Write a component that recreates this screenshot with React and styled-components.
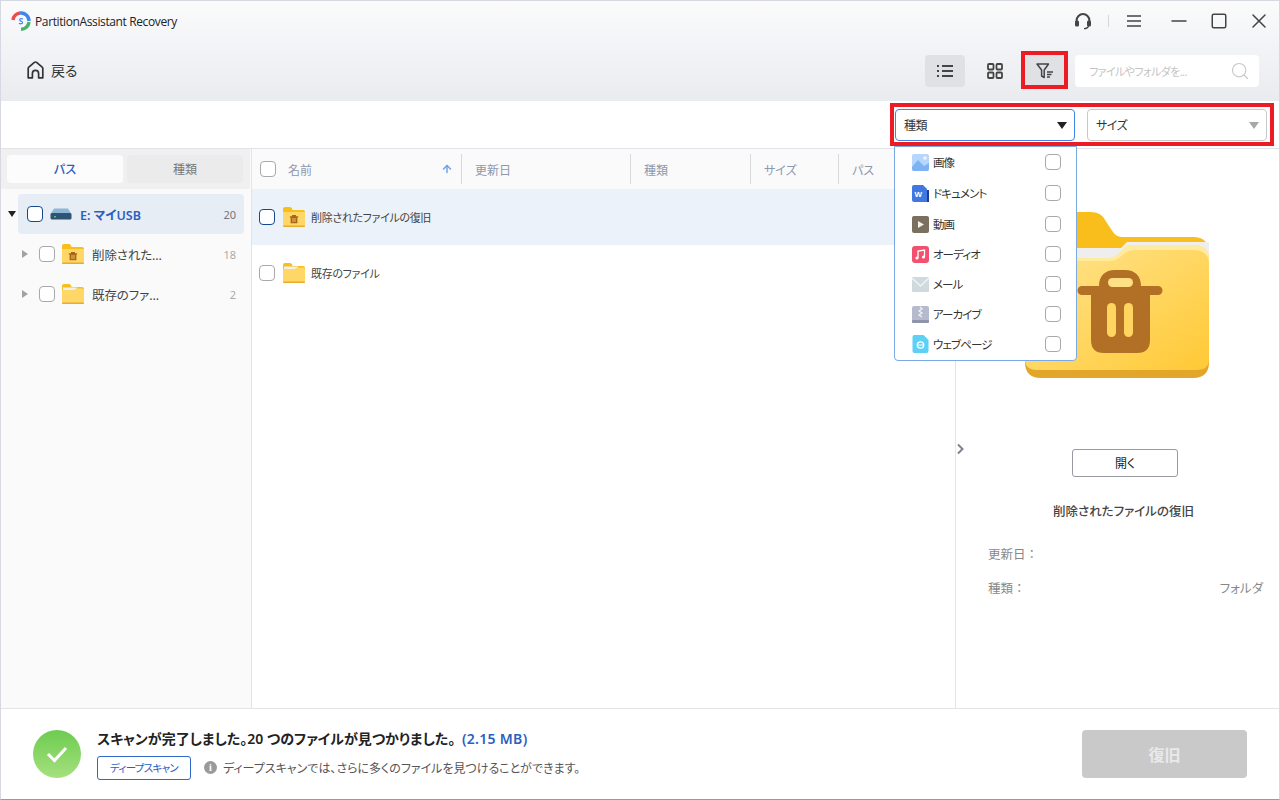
import React from "react";
import styled, { createGlobalStyle } from "styled-components";
import { LuSearch, LuX, LuMinus, LuSquare, LuArrowUp } from "react-icons/lu";

const GlobalStyle = createGlobalStyle`
  html, body { margin: 0; padding: 0; background: #fff; }
  body {
    font-family: "Noto Sans", "Noto Sans CJK JP", sans-serif;
    font-feature-settings: "palt";
    color: #333;
  }
  * { box-sizing: border-box; }
`;

const Window = styled.div`
  position: relative;
  display: flex;
  flex-direction: column;
  width: 1280px;
  height: 800px;
  overflow: hidden;
  border: 1px solid #d6d9e2;
  border-bottom-color: #9a9a9a;
  background: #fff;
`;

// header
const Header = styled.header`
  flex: none;
  height: 100px;
  background: linear-gradient(180deg, #fbfbfc 0%, #e9ebef 100%);
`;
const TitleRow = styled.div`
  display: flex;
  align-items: center;
  height: 40px;
  padding-left: 10px;
`;
const AppName = styled.div`
  margin-left: 4px;
  font-family: "Open Sans", sans-serif;
  font-size: 12px;
  letter-spacing: -0.38px;
  color: #222;
`;
const WinControls = styled.div`
  display: flex;
  align-items: center;
  margin-left: auto;
  color: #444;
`;
const WinIcon = styled.div`
  display: flex;
  align-items: center;
  justify-content: center;
  width: ${(p) => p.$w || 40}px;
`;
const WinDivider = styled.div`
  width: 1px;
  height: 12px;
  margin-left: 16px;
  background: #d5d6da;
`;
const ToolRow = styled.div`
  display: flex;
  align-items: flex-start;
  height: 60px;
  padding: 14px 20px 0 26px;
`;
const BackLink = styled.div`
  display: flex;
  align-items: center;
  gap: 7px;
  height: 32px;
  margin-top: -1px;
  font-size: 14px;
  color: #333;
`;
const ToolGroup = styled.div`
  display: flex;
  align-items: flex-start;
  gap: 10px;
  margin-left: auto;
`;
const ToolBtn = styled.div`
  position: relative;
  display: flex;
  align-items: center;
  justify-content: center;
  width: 40px;
  height: 32px;
  border-radius: 4px;
  background: ${(p) => (p.$on ? "#dfe1e5" : "transparent")};
  color: #444;
`;
const RedMark = styled.div`
  position: absolute;
  left: -4px;
  right: -3px;
  top: -4px;
  bottom: -2px;
  border: 4px solid #ed1c24;
`;
const SearchBox = styled.div`
  display: flex;
  align-items: center;
  justify-content: space-between;
  width: 184px;
  height: 32px;
  padding: 0 9px 0 14px;
  border-radius: 4px;
  background: #fff;
  font-size: 11px;
  letter-spacing: -0.6px;
  color: #c4c4c4;
`;

// filter bar
const FilterBar = styled.div`
  position: relative;
  z-index: 3;
  flex: none;
  display: flex;
  justify-content: flex-end;
  height: 48px;
  padding: 2px 5px 0 0;
  border-bottom: 1px solid #e2e3e8;
  background: #fff;
`;
const FilterFrame = styled.div`
  display: flex;
  gap: 12px;
  width: 384px;
  height: 43px;
  padding: 2px 3px 0 1px;
  border: 4px solid #ed1c24;
`;
const Select = styled.div`
  display: flex;
  flex: none;
  align-items: center;
  justify-content: space-between;
  width: 180px;
  height: 32px;
  padding: 0 7px 0 8px;
  border: 1px solid ${(p) => (p.$active ? "#3d86e6" : "#c9c9c9")};
  border-radius: 4px;
  font-size: 12px;
  letter-spacing: -0.5px;
  color: #333;
`;
const Caret = styled.span`
  width: 0;
  height: 0;
  border-left: 5px solid transparent;
  border-right: 5px solid transparent;
  border-top: 7px solid ${(p) => (p.$muted ? "#a8a8a8" : "#222")};
`;
const Dropdown = styled.div`
  position: absolute;
  z-index: -1;
  top: 45px;
  right: 202px;
  width: 183px;
  height: 215px;
  border: 1px solid #7aa9e4;
  border-radius: 0 0 4px 4px;
  background: #fff;
`;
const DropItem = styled.div`
  display: flex;
  align-items: center;
  height: 30px;
  padding: 0 15px 0 17px;
  font-size: 11.5px;
  color: #333;

  &:nth-child(2) {
    height: 32px;
  }
`;
const DropLabel = styled.span`
  flex: 1;
  margin-left: 4px;
  letter-spacing: -0.9px;
`;

// body
const Body = styled.div`
  flex: 1;
  display: flex;
  min-height: 0;
`;
const Sidebar = styled.aside`
  flex: none;
  width: 251px;
  border-right: 1px solid #e4e4e6;
  background: #fafafa;
`;
const TabStrip = styled.div`
  display: flex;
  gap: 4px;
  width: 249px;
  height: 40px;
  padding: 6px;
  background: #f0f0f0;
`;
const Tab = styled.div`
  display: flex;
  align-items: center;
  justify-content: center;
  width: 116px;
  border-radius: 4px;
  font-size: 12px;
  font-weight: ${(p) => (p.$on ? 500 : 400)};
  color: ${(p) => (p.$on ? "#2c5fc0" : "#777")};
  background: ${(p) => (p.$on ? "#fcfcfc" : "#ebebeb")};
`;
const Tree = styled.div`
  padding: 5px 6px 0 5px;
`;
const TreeRow = styled.div`
  display: flex;
  align-items: center;
  height: 40px;
  padding-right: ${(p) => (p.$root ? 1 : 9)}px;
  padding-left: ${(p) => (p.$root ? 2 : 16)}px;
`;
const RootHighlight = styled.div`
  display: flex;
  align-items: center;
  flex: 1;
  height: 40px;
  margin-left: 2px;
  padding: 0 8px 0 9px;
  border-radius: 4px;
  background: #e6edf5;
`;
const Expander = styled.span`
  flex: none;
  width: 0;
  height: 0;
  ${(p) =>
    p.$open
      ? "border-left: 4px solid transparent; border-right: 4px solid transparent; border-top: 6px solid #222;"
      : "border-top: 4px solid transparent; border-bottom: 4px solid transparent; border-left: 6px solid #a2a2a2;"}
`;
const Check = styled.span`
  flex: none;
  display: block;
  width: 16px;
  height: 16px;
  margin: ${(p) => p.$m || 0};
  border: 1px solid ${(p) => (p.$blue ? "#17478f" : "#a9a9a9")};
  border-radius: 4px;
  background: #fff;
`;
const DriveSlot = styled.span`
  display: flex;
  margin-left: 7px;
`;
const TreeName = styled.span`
  flex: 1;
  margin-left: 8px;
  font-size: ${(p) => (p.$root ? 12.5 : 12.5)}px;
  font-weight: ${(p) => (p.$root ? 600 : 400)};
  letter-spacing: ${(p) => (p.$root ? 0 : -0.1)}px;
  color: ${(p) => (p.$root ? "#2c5fc0" : "#444")};
`;
const TreeCount = styled.span`
  font-size: 11px;
  color: ${(p) => (p.$dark ? "#777" : "#aaa")};
`;

const Main = styled.main`
  flex: none;
  width: 704px;
  border-right: 1px solid #e4e4e6;
`;
const TableHead = styled.div`
  display: grid;
  grid-template-columns: 209px 169px 120px 88px 1fr;
  height: 40px;
  background: #fafafa;
`;
const HeadCell = styled.div`
  display: flex;
  align-items: center;
  margin: 5px 0;
  padding: 2px 0 0 13px;
  border-left: 1px solid #d9d9d9;
  font-size: 12px;
  color: #8d98ad;
`;
const NameCell = styled.div`
  display: flex;
  align-items: center;
  margin: 5px 0;
  padding: 0 8px;
  font-size: 12px;
  color: #8d98ad;
`;
const HeadName = styled.span`
  flex: 1;
  margin-left: 12px;
  padding-top: 2px;
`;
const SortArrow = styled(LuArrowUp)`
  color: #6fa3e8;
`;
const FileRow = styled.div`
  display: flex;
  align-items: center;
  height: 56px;
  padding-left: 7px;
  background: ${(p) => (p.$on ? "#ebf2fa" : "#fff")};
  font-size: 11px;
  letter-spacing: -0.33px;
  color: #444;
`;
const FileName = styled.span`
  margin-left: 6px;
`;

const Preview = styled.aside`
  position: relative;
  flex: 1;
  display: flex;
  flex-direction: column;
  padding-top: 63px;
  font-size: 12.5px;
`;
const ExpandChevron = styled.div`
  position: absolute;
  top: 293px;
  left: 0;
  color: #7d8391;
`;
const BigFolder = styled.svg`
  display: block;
  flex: none;
  margin-left: 69px;
`;
const OpenBtn = styled.div`
  display: flex;
  align-items: center;
  justify-content: center;
  width: 106px;
  height: 28px;
  margin: 71px 0 0 116px;
  border: 1px solid #9a9aa2;
  border-radius: 3px;
  font-size: 12px;
  color: #222;
`;
const PreviewName = styled.div`
  margin: 24px 0 0 97px;
  font-weight: 500;
  color: #444;
`;
const Meta = styled.div`
  display: flex;
  justify-content: space-between;
  margin: ${(p) => p.$mt}px 16px 0 32px;
  font-size: 12.5px;
  color: #888;
`;
const MetaLabel = styled.span`
  font-feature-settings: normal;
`;

// footer
const Footer = styled.footer`
  flex: none;
  display: flex;
  align-items: center;
  height: 91px;
  padding: 0 32px;
  border-top: 1px solid #e4e4e6;
`;
const DoneBadge = styled.div`
  flex: none;
  display: flex;
  align-items: center;
  justify-content: center;
  width: 48px;
  height: 48px;
  border-radius: 50%;
  background: linear-gradient(180deg, #6dcc50 0%, #a6e07e 100%);
`;
const Status = styled.div`
  margin-left: 16px;
`;
const StatusLine = styled.div`
  font-size: 14px;
  font-weight: 600;
  line-height: 20px;
  color: #222;
`;
const Size = styled.span`
  margin-left: 3px;
  letter-spacing: 0.3px;
  color: #2c5fc0;
`;
const HintRow = styled.div`
  display: flex;
  align-items: center;
  margin-top: 7px;
  font-size: 12px;
  color: #555;
`;
const DeepBtn = styled.div`
  display: flex;
  align-items: center;
  justify-content: center;
  width: 94px;
  height: 24px;
  margin-right: 13px;
  border: 1px solid #2f68c8;
  border-radius: 3px;
  font-size: 10.5px;
  letter-spacing: -0.7px;
  color: #2c5fc0;
`;
const InfoDot = styled.span`
  display: flex;
  align-items: center;
  justify-content: center;
  width: 13px;
  height: 13px;
  margin-right: 6px;
  border-radius: 50%;
  background: #9a9a9a;
  font-family: "Liberation Serif", serif;
  font-size: 10px;
  font-weight: 700;
  color: #fff;
`;
const RecoverBtn = styled.div`
  display: flex;
  align-items: center;
  justify-content: center;
  width: 165px;
  height: 48px;
  margin-left: auto;
  border-radius: 4px;
  background: #c9c9c9;
  font-size: 16px;
  font-weight: 700;
  color: #e9e9e9;
`;

const Logo = () => (
  <svg width="20" height="20" viewBox="0 0 20 20" fill="none">
    <path d="M2 9 A8 8 0 0 1 9 2" stroke="#ee4b4b" strokeWidth="3.4" />
    <path d="M9 2 A8 8 0 0 1 18 10" stroke="#3f86ee" strokeWidth="3.4" />
    <path d="M18 11 A8 8 0 0 1 10 18.2" stroke="#44b565" strokeWidth="3.4" />
    <path d="M12 8 C10 7 8 8 9 9.5 C10 10.5 12 10.5 11.5 12 C11 13 9 13 8 12.2" stroke="#3f86ee" strokeWidth="1.2" />
  </svg>
);

const Headset = () => (
  <svg width="18" height="18" viewBox="0 0 18 18" fill="none">
    <path d="M2.6 10 V8.5 A6.4 6.4 0 0 1 15.4 8.5 V10" stroke="#444" strokeWidth="2" />
    <rect x="1" y="8.5" width="4" height="6" rx="1.5" fill="#444" />
    <rect x="13" y="8.5" width="4" height="6" rx="1.5" fill="#444" />
    <path d="M14.5 14 C14 16 12 16.6 10 16.6" stroke="#444" strokeWidth="1.3" />
  </svg>
);

const Hamburger = () => (
  <svg width="16" height="14" viewBox="0 0 16 14" stroke="#444" strokeWidth="1.5">
    <path d="M1 2 H15 M1 7 H15 M1 12 H15" />
  </svg>
);

const HomeIcon = () => (
  <svg width="17" height="18" viewBox="0 0 17 18" fill="none" stroke="#333" strokeWidth="1.7" strokeLinejoin="round">
    <path d="M1.2 16.8 V7.6 Q1.2 6.8 1.8 6.2 L7.4 1.4 Q8.5 0.6 9.6 1.4 L15.2 6.2 Q15.8 6.8 15.8 7.6 V16.8 H11.6 V12.4 A3.1 3.1 0 0 0 5.4 12.4 V16.8 Z" />
  </svg>
);

const ListIcon = () => (
  <svg width="18" height="14" viewBox="0 0 18 14" stroke="#444" strokeWidth="1.9">
    <path d="M1 2 H3 M6 2 H17 M1 7 H3 M6 7 H17 M1 12 H3 M6 12 H17" />
  </svg>
);

const GridIcon = () => (
  <svg width="16" height="16" viewBox="0 0 16 16" fill="none" stroke="#444" strokeWidth="1.8">
    <rect x="1" y="1" width="5.5" height="5.5" rx="1" />
    <rect x="9.5" y="1" width="5.5" height="5.5" rx="1" />
    <rect x="1" y="9.5" width="5.5" height="5.5" rx="1" />
    <rect x="9.5" y="9.5" width="5.5" height="5.5" rx="1" />
  </svg>
);

const FilterIcon = () => (
  <svg width="18" height="16" viewBox="0 0 18 16" fill="none" stroke="#444" strokeWidth="1.5">
    <path d="M1 1 H12.5 L8.2 7 V14.5 L5.6 13 V7 Z" strokeLinejoin="round" />
    <path d="M11 9 H17 M11 11.5 H15.5 M11 14 H14" />
  </svg>
);

const DriveIcon = () => (
  <svg width="22" height="12" viewBox="0 0 22 12">
    <path d="M4 0.5 H18 L21.5 6 H0.5 Z" fill="#8eb6d6" />
    <rect x="0.5" y="5" width="21" height="6.5" rx="1.5" fill="#2f5376" />
    <rect x="4" y="8" width="2" height="1.4" fill="#46d06a" />
  </svg>
);

const FolderIcon = ({ trash }) => (
  <svg width="22" height="20" viewBox="0 0 22 20">
    <path d="M0 2 Q0 0 2 0 H7 Q8.5 0 9 1.5 L9.6 3 H20 Q22 3 22 5 V12 H0 Z" fill="#f9bd1c" />
    {!trash && <rect x="1" y="3.5" width="14" height="3" fill="#f0f0ea" />}
    <path
      d={trash ? "M0 5 H22 V18 Q22 20 20 20 H2 Q0 20 0 18 Z" : "M0 6 H12 L14 4.5 H20 Q22 4.5 22 6.5 V18 Q22 20 20 20 H2 Q0 20 0 18 Z"}
      fill="#ffd767"
    />
    <rect x="0" y="18.6" width="22" height="1.4" rx="0.7" fill="#e8ac2c" />
    {trash && (
      <path
        d="M6.8 9.2 H9 V8 H13 V9.2 H15.2 V10.4 H14.4 V16.2 H7.6 V10.4 H6.8 Z M9.6 11 V15 H10.4 V11 Z M11.6 11 V15 H12.4 V11 Z"
        fill="#a9651c"
        fillRule="evenodd"
      />
    )}
  </svg>
);

const LargeFolder = () => (
  <BigFolder width="184" height="166" viewBox="0 0 184 166">
    <defs>
      <linearGradient id="front" x1="0" y1="0" x2="1" y2="1">
        <stop offset="0" stopColor="#ffe592" />
        <stop offset="1" stopColor="#ffc935" />
      </linearGradient>
    </defs>
    <path d="M0 14 Q0 0 14 0 H66 Q76 0 80 8 L88 20 Q91 25 98 25 H168 Q184 25 184 41 V100 H0 Z" fill="#fabe1c" />
    <path d="M0 36 H96 L102 30 H184 V60 H0 Z" fill="#eeeeee" />
    <path d="M0 100 H184 V150 Q184 166 168 166 H16 Q0 166 0 150 Z" fill="#e2a62a" />
    <path d="M0 46 H84 Q88 46 92 43 L100 36 Q102 33 107 33 H168 Q184 33 184 48 V147 Q184 158 172 158 H12 Q0 158 0 147 Z" fill="url(#front)" />
    <path d="M0 46 H84 Q88 46 92 43 L100 36 Q102 33 107 33 H168 Q184 33 184 48 V52 Q184 38 168 38 H108 Q104 38 100 41 L94 46 Q90 49 84 49 H0 Z" fill="#ffeb9f" />
    <path
      d="M74 74 C74 64 80 58 90 58 H100 C110 58 116 64 116 74 H133 A4.5 4.5 0 0 1 133 83 H125 V128 Q125 141 112 141 H79 Q66 141 66 128 V83 H57 A4.5 4.5 0 0 1 57 74 Z"
      fill="#b26f26"
    />
    <rect x="83" y="66" width="25" height="9" rx="4.5" fill="#ffdf85" />
    <rect x="82" y="91" width="9" height="34" rx="4.5" fill="#ffd560" />
    <rect x="99" y="91" width="9" height="34" rx="4.5" fill="#ffd560" />
  </BigFolder>
);

const ImageType = () => (
  <svg width="17" height="17" viewBox="0 0 17 17">
    <rect width="17" height="17" rx="2" fill="#b6d6fb" />
    <path d="M0 13 L6 6 L12 12 L17 9 V15 Q17 17 15 17 H2 Q0 17 0 15 Z" fill="#7db3f5" />
    <circle cx="13" cy="4" r="1.8" fill="#eef6ff" />
  </svg>
);
const WordType = () => (
  <svg width="17" height="17" viewBox="0 0 17 17">
    <rect x="12" y="5" width="5" height="12" fill="#1c3f94" />
    <path d="M2 0 H11 L15 4 V17 H2 Q0 17 0 15 V2 Q0 0 2 0 Z" fill="#3f78e0" />
    <text x="2.5" y="12" fontSize="8" fontWeight="700" fill="#fff" fontFamily="Liberation Sans">W</text>
  </svg>
);
const VideoType = () => (
  <svg width="17" height="17" viewBox="0 0 17 17">
    <rect width="17" height="17" rx="2" fill="#7b705f" />
    <path d="M6 5 L12 8.5 L6 12 Z" fill="#f4f1ea" />
  </svg>
);
const AudioType = () => (
  <svg width="17" height="17" viewBox="0 0 17 17">
    <rect width="17" height="17" rx="3" fill="#f2506f" />
    <path d="M6 12 V5 L12.5 4 V11" fill="none" stroke="#fff" strokeWidth="1.3" />
    <circle cx="5" cy="12" r="1.6" fill="#fff" />
    <circle cx="11.5" cy="11" r="1.6" fill="#fff" />
  </svg>
);
const MailType = () => (
  <svg width="17" height="17" viewBox="0 0 17 17">
    <rect y="1" width="17" height="15" rx="1" fill="#d0dade" />
    <path d="M0 2 L8.5 10 L17 2" fill="none" stroke="#eef3f5" strokeWidth="1.6" />
  </svg>
);
const ArchiveType = () => (
  <svg width="17" height="17" viewBox="0 0 17 17">
    <rect width="17" height="17" rx="2" fill="#b5bbcd" />
    <rect y="14" width="17" height="3" rx="1" fill="#8f95a8" />
    <path d="M8 1 L10 3 L7 5 L10 7 L7 9 L10 11" fill="none" stroke="#f1f2f6" strokeWidth="1.3" />
  </svg>
);
const WebType = () => (
  <svg width="17" height="18" viewBox="0 0 16 18">
    <path d="M2 0 H11 L16 5 V16 Q16 18 14 18 H2 Q0 18 0 16 V2 Q0 0 2 0 Z" fill="#5dd0f5" />
    <circle cx="8" cy="10" r="3.2" fill="none" stroke="#fff" strokeWidth="1.3" />
    <path d="M5 10 H11" stroke="#fff" strokeWidth="1" />
  </svg>
);

const fileTypes = [
  ["画像", ImageType],
  ["ドキュメント", WordType],
  ["動画", VideoType],
  ["オーディオ", AudioType],
  ["メール", MailType],
  ["アーカイブ", ArchiveType],
  ["ウェブページ", WebType],
];

const App = () => {
  return (
    <Window>
      <GlobalStyle />
      <Header>
        <TitleRow>
          <Logo />
          <AppName>PartitionAssistant Recovery</AppName>
          <WinControls>
            <WinIcon $w={18}><Headset /></WinIcon>
            <WinDivider />
            <WinIcon $w={50}><Hamburger /></WinIcon>
            <WinIcon><LuMinus size={24} strokeWidth={1.5} /></WinIcon>
            <WinIcon><LuSquare size={18} strokeWidth={2} /></WinIcon>
            <WinIcon><LuX size={24} strokeWidth={1.5} /></WinIcon>
          </WinControls>
        </TitleRow>
        <ToolRow>
          <BackLink>
            <HomeIcon />
            戻る
          </BackLink>
          <ToolGroup>
            <ToolBtn $on><ListIcon /></ToolBtn>
            <ToolBtn><GridIcon /></ToolBtn>
            <ToolBtn $on>
              <FilterIcon />
              <RedMark />
            </ToolBtn>
            <SearchBox>
              ファイルやフォルダを...
              <LuSearch size={20} strokeWidth={1.4} color="#c8c8c8" />
            </SearchBox>
          </ToolGroup>
        </ToolRow>
      </Header>

      <FilterBar>
        <FilterFrame>
          <Select $active>種類<Caret /></Select>
          <Select>サイズ<Caret $muted /></Select>
        </FilterFrame>
        <Dropdown>
          {fileTypes.map(([label, Icon]) => (
            <DropItem key={label}>
              <Icon />
              <DropLabel>{label}</DropLabel>
              <Check />
            </DropItem>
          ))}
        </Dropdown>
      </FilterBar>

      <Body>
        <Sidebar>
          <TabStrip>
            <Tab $on>パス</Tab>
            <Tab>種類</Tab>
          </TabStrip>
          <Tree>
            <TreeRow $root>
              <Expander $open />
              <RootHighlight>
                <Check $blue />
                <DriveSlot><DriveIcon /></DriveSlot>
                <TreeName $root>E: マイUSB</TreeName>
                <TreeCount $dark>20</TreeCount>
              </RootHighlight>
            </TreeRow>
            <TreeRow>
              <Expander />
              <Check $m="0 7px 0 11px" />
              <FolderIcon trash />
              <TreeName>削除された...</TreeName>
              <TreeCount>18</TreeCount>
            </TreeRow>
            <TreeRow>
              <Expander />
              <Check $m="0 7px 0 11px" />
              <FolderIcon />
              <TreeName>既存のファ...</TreeName>
              <TreeCount>2</TreeCount>
            </TreeRow>
          </Tree>
        </Sidebar>

        <Main>
          <TableHead>
            <NameCell>
              <Check />
              <HeadName>名前</HeadName>
              <SortArrow size={12} strokeWidth={3} />
            </NameCell>
            <HeadCell>更新日</HeadCell>
            <HeadCell>種類</HeadCell>
            <HeadCell>サイズ</HeadCell>
            <HeadCell>パス</HeadCell>
          </TableHead>
          <FileRow $on>
            <Check $blue $m="0 8px 0 0" />
            <FolderIcon trash />
            <FileName>削除されたファイルの復旧</FileName>
          </FileRow>
          <FileRow>
            <Check $m="0 8px 0 0" />
            <FolderIcon />
            <FileName>既存のファイル</FileName>
          </FileRow>
        </Main>

        <Preview>
          <ExpandChevron>
            <svg width="10" height="12" viewBox="0 0 10 12" fill="none" stroke="currentColor" strokeWidth="2">
              <path d="M2 1.5 L6.5 6 L2 10.5" />
            </svg>
          </ExpandChevron>
          <LargeFolder />
          <OpenBtn>開く</OpenBtn>
          <PreviewName>削除されたファイルの復旧</PreviewName>
          <Meta $mt={24}><MetaLabel>更新日：</MetaLabel></Meta>
          <Meta $mt={15}><MetaLabel>種類：</MetaLabel><span>フォルダ</span></Meta>
        </Preview>
      </Body>

      <Footer>
        <DoneBadge>
          <svg width="24" height="20" viewBox="0 0 24 20" fill="none" stroke="#fff" strokeWidth="3">
            <path d="M3 10 L9.5 16.5 L21 4" />
          </svg>
        </DoneBadge>
        <Status>
          <StatusLine>
            スキャンが完了しました。20 つのファイルが見つかりました。 <Size>(2.15 MB)</Size>
          </StatusLine>
          <HintRow>
            <DeepBtn>ディープスキャン</DeepBtn>
            <InfoDot>i</InfoDot>
            ディープスキャンでは、さらに多くのファイルを見つけることができます。
          </HintRow>
        </Status>
        <RecoverBtn>復旧</RecoverBtn>
      </Footer>
    </Window>
  );
};

export default App;
